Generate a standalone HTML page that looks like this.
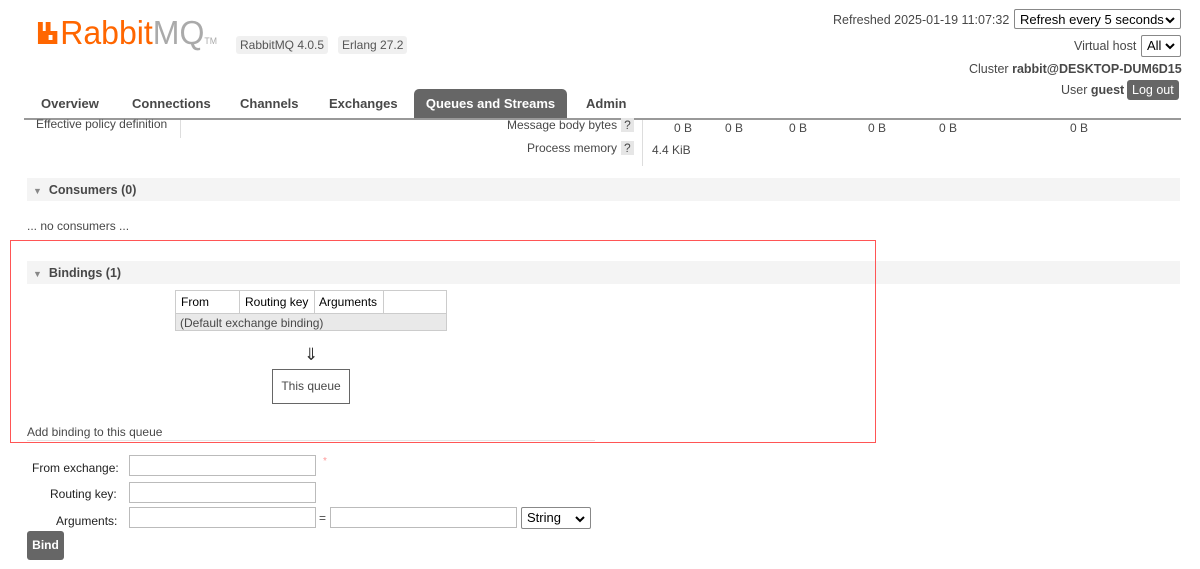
<!DOCTYPE html>
<html><head><style>
body{margin:0;width:1200px;height:569px;background:#fff;font-family:"Liberation Sans",sans-serif;font-size:12px;color:#484848;position:relative;overflow:hidden}
.a{position:absolute;white-space:nowrap}
.b{font-weight:bold}
.pill{background:#f0f0f0;border-radius:3px;padding:2px 4px;color:#555}
.inp{position:absolute;border:1px solid #bbb;height:19px;background:#fff}
.sel{position:absolute;border:1px solid #888;border-radius:2px;background:#fff;height:20px;font-size:13px;color:#000;line-height:20px;padding-left:5px;box-sizing:border-box}
.sel svg{position:absolute;right:5px;top:6px}
.q{display:inline-block;background:#e6e6e6;padding:0 3px;margin-left:4px}
.sec{position:absolute;left:27px;width:1153px;height:23px;background:#f4f4f4}
</style></head><body>
<div class="a" style="left:36px;top:14px;font-size:33px;color:#f60;letter-spacing:0px;transform:scaleX(0.97);transform-origin:left">
<svg width="24" height="26" style="vertical-align:-2px;margin-right:1px" viewBox="0 0 24 26"><path d="M2 2h5v9h3V2h5v9h7v13H2z M13 15v5h4v-5z" fill="#f60" fill-rule="evenodd"/></svg>Rabbit<span style="color:#aaa">MQ</span><span style="font-size:9px;color:#aaa;letter-spacing:0">TM</span></div>
<div class="a pill" style="left:236px;top:36px">RabbitMQ 4.0.5</div>
<div class="a pill" style="left:338px;top:36px">Erlang 27.2</div>
<div class="a" style="left:833px;top:13px;font-size:12.5px">Refreshed 2025-01-19 11:07:32</div>
<div class="sel" style="left:1014px;top:9px;width:167px">Refresh every 5 seconds<svg width="10" height="8" viewBox="0 0 10 8"><path d="M1 2l4 4 4-4" stroke="#000" stroke-width="2" fill="none"/></svg></div>
<div class="a" style="left:1074px;top:39px;font-size:12.5px">Virtual host</div>
<div class="sel" style="left:1141px;top:35px;width:40px;height:22px">All<svg width="10" height="8" viewBox="0 0 10 8"><path d="M1 2l4 4 4-4" stroke="#000" stroke-width="2" fill="none"/></svg></div>
<div class="a" style="left:969px;top:62px;font-size:12.5px">Cluster <b>rabbit@DESKTOP-DUM6D15</b></div>
<div class="a" style="left:1061px;top:83px;font-size:12.5px">User <b>guest</b></div>
<div class="a" style="left:1127px;top:80px;background:#666;color:#fff;border-radius:3px;padding:3px 5px;font-size:12.5px">Log out</div>
<div class="a b" style="left:41px;top:96px;font-size:13px">Overview</div>
<div class="a b" style="left:132px;top:96px;font-size:13px">Connections</div>
<div class="a b" style="left:240px;top:96px;font-size:13px">Channels</div>
<div class="a b" style="left:329px;top:96px;font-size:13px">Exchanges</div>
<div class="a b" style="left:414px;top:89px;width:153px;height:29px;background:#666;color:#fff;border-radius:5px 5px 0 0;text-align:center;line-height:29px;font-size:13px">Queues and Streams</div>
<div class="a b" style="left:586px;top:96px;font-size:13px">Admin</div>
<div class="a" style="left:24px;top:118px;width:1157px;height:2px;background:#999"></div>
<div class="a" style="left:36px;top:117px">Effective policy definition</div>
<div class="a" style="left:180px;top:120px;width:1px;height:18px;background:#ddd"></div>
<div class="a" style="left:507px;top:118px">Message body bytes<span class="q">?</span></div>
<div class="a" style="left:527px;top:141px">Process memory<span class="q">?</span></div>
<div class="a" style="left:642px;top:120px;width:1px;height:46px;background:#ddd"></div>
<div class="a" style="left:674px;top:121px">0 B</div><div class="a" style="left:725px;top:121px">0 B</div><div class="a" style="left:789px;top:121px">0 B</div><div class="a" style="left:868px;top:121px">0 B</div><div class="a" style="left:939px;top:121px">0 B</div><div class="a" style="left:1070px;top:121px">0 B</div>
<div class="a" style="left:652px;top:143px">4.4 KiB</div>
<div class="sec" style="top:178px"></div>
<div class="a b" style="left:33px;top:183px;font-size:12.5px"><span style="font-size:9px;color:#888">&#9660;</span>&nbsp; Consumers (0)</div>
<div class="a" style="left:27px;top:219px">... no consumers ...</div>
<div class="sec" style="top:261px"></div>
<div class="a b" style="left:33px;top:266px;font-size:12.5px"><span style="font-size:9px;color:#888">&#9660;</span>&nbsp; Bindings (1)</div>
<div class="a" style="left:10px;top:240px;width:866px;height:203px;border:1px solid #f55;box-sizing:border-box"></div>
<div class="a" style="left:175px;top:290px;width:272px;height:41px;border:1px solid #ccc;box-sizing:border-box">
<div class="a" style="left:0;top:0;width:270px;height:22px;border-bottom:1px solid #ccc"></div>
<div class="a" style="left:63px;top:0;width:1px;height:22px;background:#ccc"></div>
<div class="a" style="left:138px;top:0;width:1px;height:22px;background:#ccc"></div>
<div class="a" style="left:207px;top:0;width:1px;height:22px;background:#ccc"></div>
<div class="a" style="left:5px;top:4px;color:#000">From</div><div class="a" style="left:69px;top:4px;color:#000">Routing key</div><div class="a" style="left:143px;top:4px;color:#000">Arguments</div>
<div class="a" style="left:0;top:23px;width:270px;height:16px;background:#e9e9e9"></div>
<div class="a" style="left:4px;top:25px">(Default exchange binding)</div></div>
<div class="a" style="left:304px;top:345px;font-size:17px;color:#333">&#8659;</div>
<div class="a" style="left:272px;top:369px;width:78px;height:35px;border:1px solid #666;box-sizing:border-box;text-align:center;line-height:33px">This queue</div>
<div class="a" style="left:27px;top:425px">Add binding to this queue</div>
<div class="a" style="left:27px;top:440px;width:568px;height:1px;background:#e4e4e4"></div>
<div class="a" style="left:32px;top:461px;color:#222">From exchange:</div>
<div class="a" style="left:50px;top:487px;color:#222">Routing key:</div>
<div class="a" style="left:56px;top:514px;color:#222">Arguments:</div>
<div class="inp" style="left:129px;top:455px;width:185px"></div>
<div class="a" style="left:323px;top:456px;color:#f99;font-size:10px">*</div>
<div class="inp" style="left:129px;top:482px;width:185px"></div>
<div class="inp" style="left:129px;top:507px;width:185px"></div>
<div class="a" style="left:319px;top:511px">=</div>
<div class="inp" style="left:330px;top:507px;width:185px"></div>
<div class="sel" style="left:521px;top:507px;width:70px;height:22px;color:#000">String<svg width="10" height="8" viewBox="0 0 10 8" style="top:7px"><path d="M1 2l4 4 4-4" stroke="#000" stroke-width="2" fill="none"/></svg></div>
<div class="a b" style="left:27px;top:531px;width:37px;height:29px;background:#666;color:#fff;border-radius:3px;text-align:center;line-height:29px">Bind</div>
</body></html>
